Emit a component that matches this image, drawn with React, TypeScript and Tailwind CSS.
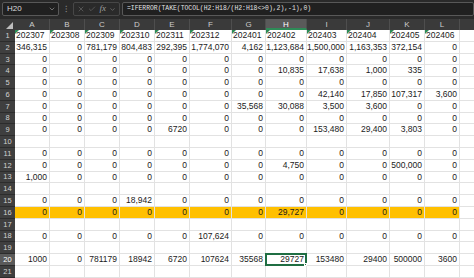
import { X, Check, ChevronDown } from 'lucide-react';

const COLS = ['A', 'B', 'C', 'D', 'E', 'F', 'G', 'H', 'I', 'J', 'K', 'L'];
const W = [
  'w-[35px]', 'w-[35px]', 'w-[35px]', 'w-[35px]', 'w-[35px]', 'w-[42px]',
  'w-[34px]', 'w-[41px]', 'w-[40px]', 'w-[43px]', 'w-[35px]', 'w-[35px]',
];

const Z = Array(12).fill('0');
const E = Array(12).fill('');

const ROWS: string[][] = [
  ['202307', '202308', '202309', '202310', '202311', '202312', '202401', '202402', '202403', '202404', '202405', '202406'],
  ['346,315', '0', '781,179', '804,483', '292,395', '1,774,070', '4,162', '1,123,684', '1,500,000', '1,163,353', '372,154', '0'],
  Z,
  ['0', '0', '0', '0', '0', '0', '0', '10,835', '17,638', '1,000', '335', '0'],
  Z,
  ['0', '0', '0', '0', '0', '0', '0', '0', '42,140', '17,850', '107,317', '3,600'],
  ['0', '0', '0', '0', '0', '0', '35,568', '30,088', '3,500', '3,600', '0', '0'],
  Z,
  ['0', '0', '0', '0', '6720', '0', '0', '0', '153,480', '29,400', '3,803', '0'],
  E,
  Z,
  ['0', '0', '0', '0', '0', '0', '0', '4,750', '0', '0', '500,000', '0'],
  ['1,000', '0', '0', '0', '0', '0', '0', '0', '0', '0', '0', '0'],
  E,
  ['0', '0', '0', '18,942', '0', '0', '0', '0', '0', '0', '0', '0'],
  ['0', '0', '0', '0', '0', '0', '0', '29,727', '0', '0', '0', '0'],
  E,
  ['0', '0', '0', '0', '0', '107,624', '0', '0', '0', '0', '0', '0'],
  E,
  ['1000', '0', '781179', '18942', '6720', '107624', '35568', '29727', '153480', '29400', '500000', '3600'],
  E,
];

export default function App() {
  return (
    <div className="w-[474px] h-[278px] overflow-hidden bg-white font-['Liberation_Sans',Arial,sans-serif]">
      <FormulaBar />
      <div className="flex h-[11px] bg-[#3a3a3a] text-[#cdcdcd] text-[8px] leading-[11px]">
        <div className="w-[15px] shrink-0 flex items-end justify-end pr-[2px] pb-[1px]">
          <svg width="7" height="7" viewBox="0 0 7 7">
            <polygon points="7,0 7,7 0,7" fill="#bdbdbd" />
          </svg>
        </div>
        {COLS.map((c, i) => (
          <div
            key={c}
            className={`${W[i]} shrink-0 text-center border-r border-[#4e4e4e] ${
              c === 'H' ? 'bg-[#5a5a5a] text-white border-b-2 border-b-[#2e8b57]' : ''
            }`}
          >
            {c}
          </div>
        ))}
        <div className="flex-1" />
      </div>
      {ROWS.map((r, ri) => (
        <Row key={ri} n={ri + 1} cells={r} />
      ))}
    </div>
  );
}

function FormulaBar() {
  return (
    <div className="h-[19px] bg-[#2a2a2a] flex items-center pl-[2px] pb-[1px]">
      <div className="w-[57px] h-[14px] rounded-[2px] border border-[#585858] bg-[#202020] flex items-center justify-between pl-[4px] pr-[2px] text-[8px] text-[#dcdcdc]">
        <span>H20</span>
        <ChevronDown size={8} color="#9a9a9a" />
      </div>
      <div className="w-[14px] text-center text-[9px] text-[#8c8c8c] leading-none">⁝</div>
      <div className="w-[47px] h-[14px] rounded-[2px] border border-[#474747] flex items-center justify-around px-[1px]">
        <X size={8} color="#6a6a6a" />
        <Check size={8} color="#6a6a6a" />
        <span className="font-['Liberation_Serif',serif] italic text-[9px] text-[#a0a0a0]">fx</span>
        <ChevronDown size={7} color="#8a8a8a" />
      </div>
      <div className="flex-1 h-[14px] ml-[2px] rounded-[2px] border border-[#585858] bg-[#202020] flex items-center pl-[4px] text-[6.4px] text-[#e2e2e2] font-['Liberation_Mono',monospace] whitespace-nowrap overflow-hidden">
        =IFERROR(TAKE(TOCOL(H2:H18/(H2:H18&lt;&gt;0),2),-1),0)
      </div>
    </div>
  );
}

function Row({ n, cells }: { n: number; cells: string[] }) {
  const hl = n === 16;
  const sel = n === 20;
  return (
    <div className="flex h-[11.8px] text-[8.5px] leading-[11px] text-[#1b1b1b]">
      <div
        className={`w-[15px] shrink-0 flex items-center justify-center text-[7.5px] border-b border-[#2c2c2c] ${
          sel ? 'bg-[#5a5a5a] text-white' : 'bg-[#3f3f3f] text-[#d2d2d2]'
        }`}
      >
        {n}
      </div>
      {cells.map((v, i) => (
        <div
          key={i}
          className={`${W[i]} shrink-0 relative whitespace-nowrap border-r border-b border-[#e2e2e2] ${hl ? 'bg-[#ffc000]' : ''} ${
            n === 1 ? 'text-left pl-[1px]' : 'text-right pr-[2px]'
          }`}
        >
          {n === 1 && (
            <span className="absolute left-0 top-0 w-0 h-0 border-t-[4px] border-r-[4px] border-t-[#2e8b57] border-r-transparent" />
          )}
          {v}
          {sel && i === 7 && (
            <span className="absolute -left-[1px] -top-[1px] -right-[1px] -bottom-[1px] border-2 border-[#1f6e43]">
              <span className="absolute -right-[2px] -bottom-[2px] w-[3px] h-[3px] bg-[#1f6e43] border border-white" />
            </span>
          )}
        </div>
      ))}
      <div className="flex-1 border-b border-[#e2e2e2]" />
    </div>
  );
}
